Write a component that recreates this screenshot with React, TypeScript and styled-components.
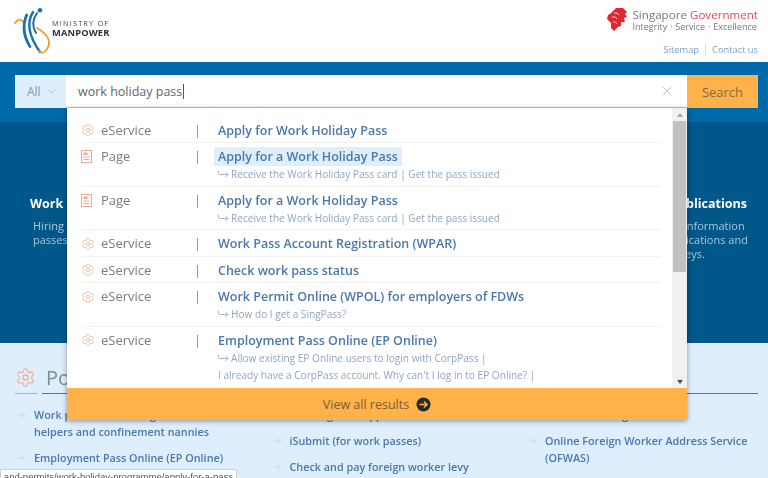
import styled, { createGlobalStyle } from "styled-components";
import { ArrowRight, ChevronDown, Settings, X } from "lucide-react";

const GlobalStyle = createGlobalStyle`
  html, body {
    margin: 0;
    padding: 0;
    background: #fff;
    overflow: hidden;
  }
  * {
    box-sizing: border-box;
  }
`;

const Page = styled.div`
  position: relative;
  width: 768px;
  height: 478px;
  overflow: hidden;
  font-family: "Open Sans", "Liberation Sans", sans-serif;
  color: #4a78ad;
  filter: blur(0.35px);
`;

const Header = styled.header`
  height: 62px;
  display: flex;
  justify-content: space-between;
  padding: 8px 10px 0 14px;
  background: #fff;
`;

const MomLogo = styled.div`
  display: flex;
  align-items: flex-start;
  height: 46px;
`;

const MomText = styled.div`
  display: flex;
  flex-direction: column;
  padding-top: 10px;
  font-size: 7.3px;
  line-height: 10px;
  letter-spacing: 1.2px;
  color: #444;
`;

const MomStrong = styled.span`
  font-size: 9.3px;
  font-weight: 700;
  letter-spacing: 0.15px;
  color: #333;
`;

const HeaderRight = styled.div`
  display: flex;
  flex-direction: column;
  align-items: flex-end;
  gap: 11px;
`;

const GovLogo = styled.div`
  display: flex;
  gap: 4px;
  align-items: center;
`;

const GovText = styled.div`
  display: flex;
  flex-direction: column;
  font-size: 11.6px;
  line-height: 14px;
  color: #77787c;
`;

const GovRed = styled.span`
  color: #e5484f;
`;

const GovMotto = styled.span`
  font-size: 9px;
  line-height: 10px;
  color: #77787c;
  word-spacing: 0.5px;
`;

const TopLinks = styled.nav`
  display: flex;
  align-items: center;
  font-size: 9.3px;
  line-height: 13px;
  color: #7aa0c6;
`;

const TopLink = styled.a`
  padding: 0 6px;
  &:last-child {
    padding-right: 0;
    border-left: 1px solid #cfdce8;
  }
`;

const SearchBand = styled.section`
  position: relative;
  height: 60px;
  padding: 13px 10px 14px 15px;
  background: #0069a9;
  display: flex;
`;

const ScopeBox = styled.div`
  width: 51px;
  display: flex;
  align-items: center;
  gap: 4px;
  padding-left: 12px;
  background: #deeefc;
  font-size: 12px;
  color: #8a97a5;
`;

const SearchInput = styled.div`
  flex: 1;
  display: flex;
  align-items: center;
  justify-content: space-between;
  padding: 0 12px;
  background: #fff;
  border-bottom: 1px solid #b5cde2;
  font-size: 12.5px;
  color: #666;
`;

const Caret = styled.span`
  display: inline-block;
  width: 1px;
  height: 15px;
  margin-left: 1px;
  background: #555;
  vertical-align: -3px;
`;

const SearchButton = styled.div`
  width: 71px;
  display: flex;
  align-items: center;
  justify-content: center;
  background: #ffb24a;
  font-size: 13px;
  color: #8a6a3c;
`;

const Dropdown = styled.div`
  position: absolute;
  left: 67px;
  top: 46px;
  width: 620px;
  height: 312px;
  display: flex;
  flex-direction: column;
  background: #fff;
  box-shadow: 0 1px 5px rgba(0, 0, 0, 0.4);
  z-index: 2;
`;

const DropdownBody = styled.div`
  flex: 1;
  min-height: 0;
  display: flex;
`;

const ResultList = styled.div`
  flex: 1;
  overflow: hidden;
  padding: 8.5px 11px 0 14px;
`;

const Row = styled.div`
  display: grid;
  grid-template-columns: 20px 95px 22px 1fr;
  padding: 4px 0 2.5px;
  border-bottom: 1px solid #f3f3f3;
`;

const RowIcon = styled.div`
  height: 19px;
  display: flex;
  align-items: center;
  color: #f0a98e;
`;

const RowType = styled.div`
  font-size: 13px;
  line-height: 19px;
  color: #7c7c7c;
`;

const Pipe = styled.div`
  font-size: 13px;
  line-height: 19px;
  color: #8b8b8b;
  transform: translateX(-2px);
`;

const RowMain = styled.div`
  min-width: 0;
  display: flex;
  flex-direction: column;
  align-items: flex-start;
`;

const RowTitle = styled.span<{ $active?: boolean }>`
  font-size: 12.5px;
  line-height: 19px;
  font-weight: 600;
  color: #4a78ad;
  margin-left: -4px;
  padding: 0 4px;
  background: ${(p) => (p.$active ? "#deeefc" : "transparent")};
`;

const RowSub = styled.div`
  font-size: 10.1px;
  line-height: 17px;
  color: #8ea6c4;
`;

const HookIcon = styled.svg`
  width: 11px;
  height: 9px;
  margin-right: 2px;
  vertical-align: -1px;
`;

const Scrollbar = styled.div`
  width: 15px;
  display: flex;
  flex-direction: column;
  background: #f1f1f1;
`;

const ScrollArrow = styled.div<{ $down?: boolean }>`
  height: 13px;
  display: flex;
  align-items: center;
  justify-content: center;
  &::before {
    content: "";
    border-left: 3px solid transparent;
    border-right: 3px solid transparent;
    ${(p) =>
      p.$down ? "border-top: 4px solid #505050;" : "border-bottom: 4px solid #a3a3a3;"}
  }
`;

const ScrollThumb = styled.div`
  height: 151px;
  margin: 0 1px;
  background: #c1c1c1;
`;

const ScrollRest = styled.div`
  flex: 1;
`;

const ViewAll = styled.div`
  height: 32px;
  display: flex;
  align-items: center;
  justify-content: center;
  gap: 7px;
  background: #ffb24a;
  font-size: 12.5px;
  color: #7a5f36;
`;

const Hero = styled.section`
  height: 221px;
  padding: 0 17px 82px 30px;
  display: flex;
  justify-content: space-between;
  align-items: flex-end;
  background: #00578a;
`;

const HeroColumn = styled.div`
  width: 88px;
  color: #fff;
`;

const HeroIcon = styled.div`
  height: 26px;
  color: #f0a98e;
`;

const HeroTitle = styled.div<{ $indent?: number }>`
  font-size: 12.5px;
  line-height: 17px;
  font-weight: 700;
  margin-bottom: 7px;
  padding-left: ${(p) => p.$indent ?? 0}px;
`;

const HeroText = styled.div<{ $inset?: number }>`
  min-height: 42px;
  padding-left: ${(p) => p.$inset ?? 0}px;
  font-size: 11px;
  line-height: 14px;
  color: #a9c6dc;
`;

const Popular = styled.section`
  height: 135px;
  padding: 24px 10px 0 15px;
  background: #deeefc;
`;

const PopularHead = styled.div`
  display: flex;
  gap: 4px;
  height: 27px;
`;

const PopularIcon = styled.div`
  width: 23px;
  height: 27px;
  color: #f0a98e;
  border-bottom: 1px solid #ee9f84;
`;

const PopularTitle = styled.h2`
  flex: 1;
  margin: 0;
  padding-left: 4px;
  font-size: 20px;
  line-height: 22px;
  font-weight: 400;
  color: #7c8a99;
  border-bottom: 1px solid #4a78ad;
`;

const LinkColumns = styled.div`
  display: grid;
  grid-template-columns: repeat(3, 255.5px);
  padding-top: 12px;
`;

const LinkColumn = styled.ul`
  margin: 0;
  padding: 0;
  list-style: none;
  display: flex;
  flex-direction: column;
  gap: 9px;
`;

const LinkItem = styled.li`
  display: flex;
  gap: 7px;
  padding-right: 25px;
  font-size: 10.8px;
  line-height: 17px;
  font-weight: 600;
  color: #4a78ad;
`;

const LinkArrow = styled.span`
  flex: none;
  width: 12px;
  height: 17px;
  display: flex;
  align-items: center;
  color: #b7c6d2;
`;

const StatusBar = styled.div`
  position: absolute;
  left: 0;
  bottom: -6px;
  width: 237px;
  height: 15px;
  display: flex;
  justify-content: flex-end;
  overflow: hidden;
  white-space: nowrap;
  padding: 1px 3px 0 0;
  background: #fff;
  border: 1px solid #d0d0d0;
  font-family: "Liberation Sans", sans-serif;
  font-size: 9.5px;
  line-height: 12px;
  color: #555;
  z-index: 3;
`;

function Hook() {
  return (
    <HookIcon viewBox="0 0 11 9" fill="none" stroke="#a9b4bf" strokeWidth="1">
      <path d="M.5 1v2.5q0 1 1 1H10M7.5 2l2.5 2.5L7.5 7" />
    </HookIcon>
  );
}

function PageIcon() {
  return (
    <svg width="11" height="13" viewBox="0 0 11 13" fill="none" stroke="#f0a98e">
      <rect x=".5" y=".5" width="10" height="12" />
      <rect x="2.5" y="2.5" width="4" height="2.5" fill="#f0a98e" stroke="none" />
      <path d="M2.5 7h6M2.5 9.5h6" />
    </svg>
  );
}

type Result = {
  kind: "eService" | "Page";
  title: string;
  active?: boolean;
  sub?: string[];
};

const results: Result[] = [
  { kind: "eService", title: "Apply for Work Holiday Pass" },
  {
    kind: "Page",
    title: "Apply for a Work Holiday Pass",
    active: true,
    sub: ["Receive the Work Holiday Pass card | Get the pass issued"],
  },
  {
    kind: "Page",
    title: "Apply for a Work Holiday Pass",
    sub: ["Receive the Work Holiday Pass card | Get the pass issued"],
  },
  { kind: "eService", title: "Work Pass Account Registration (WPAR)" },
  { kind: "eService", title: "Check work pass status" },
  {
    kind: "eService",
    title: "Work Permit Online (WPOL) for employers of FDWs",
    sub: ["How do I get a SingPass?"],
  },
  {
    kind: "eService",
    title: "Employment Pass Online (EP Online)",
    sub: [
      "Allow existing EP Online users to login with CorpPass |",
      "I already have a CorpPass account. Why can't I log in to EP Online? |",
      "Check if you can use EP Online using CorpPass",
    ],
  },
];

const linkColumns = [
  [
    "Work permits for foreign domestic helpers and confinement nannies",
    "Employment Pass Online (EP Online)",
  ],
  [
    "Working Pass Application",
    "iSubmit (for work passes)",
    "Check and pay foreign worker levy",
  ],
  [
    "SGWorkPass digital cards",
    "Online Foreign Worker Address Service (OFWAS)",
  ],
];

function App() {
  return (
    <Page>
      <GlobalStyle />
      <Header>
        <MomLogo>
          <svg width="38" height="46" viewBox="0 0 38 46" fill="none" strokeLinecap="round">
            <circle cx="26" cy="2.3" r="2.3" fill="#1a70b0" />
            <path d="M1 15Q5 9 9 13.5" stroke="#f39a2e" strokeWidth="1.7" />
            <path d="M12.7 7Q6 22 16 38.6" stroke="#1a70b0" strokeWidth="2.8" />
            <path d="M19 4Q9 20 26 44" stroke="#1a70b0" strokeWidth="2.4" />
            <path d="M23 5Q16 15 22 25" stroke="#1a70b0" strokeWidth="2" />
            <path d="M23 20Q40 30 33 41Q29 47 25 43" stroke="#f39a2e" strokeWidth="1.7" />
          </svg>
          <MomText>
            <span>MINISTRY OF</span>
            <MomStrong>MANPOWER</MomStrong>
          </MomText>
        </MomLogo>
        <HeaderRight>
          <GovLogo>
            <svg width="21" height="24" viewBox="0 0 21 24">
              <path
                fill="#e5262f"
                d="M3 6 9 0 16 0 20 4 18 6 20 9 17 10 18 14 14 14 14 18 11 19 7 23 4 20 4 15 0 11 1 7Z"
              />
              <path
                d="M7 5Q11 4 12 7M5 9Q9 8 10 11M6 14Q9 13 10 16"
                fill="none"
                stroke="#fff"
                strokeWidth="0.8"
              />
            </svg>
            <GovText>
              <span>
                Singapore <GovRed>Government</GovRed>
              </span>
              <GovMotto>Integrity · Service · Excellence</GovMotto>
            </GovText>
          </GovLogo>
          <TopLinks>
            <TopLink>Sitemap</TopLink>
            <TopLink>Contact us</TopLink>
          </TopLinks>
        </HeaderRight>
      </Header>

      <SearchBand>
        <ScopeBox>
          All
          <ChevronDown size={13} strokeWidth={1} />
        </ScopeBox>
        <SearchInput>
          <span>
            work holiday pass
            <Caret />
          </span>
          <X size={16} strokeWidth={1} color="#a8a8a8" />
        </SearchInput>
        <SearchButton>Search</SearchButton>

        <Dropdown>
          <DropdownBody>
            <ResultList>
              {results.map((r, i) => (
                <Row key={i}>
                  <RowIcon>
                    {r.kind === "Page" ? (
                      <PageIcon />
                    ) : (
                      <Settings size={14} strokeWidth={1.2} />
                    )}
                  </RowIcon>
                  <RowType>{r.kind}</RowType>
                  <Pipe>|</Pipe>
                  <RowMain>
                    <RowTitle $active={r.active}>{r.title}</RowTitle>
                    {r.sub?.map((line, j) => (
                      <RowSub key={j}>
                        {j === 0 && <Hook />}
                        {line}
                      </RowSub>
                    ))}
                  </RowMain>
                </Row>
              ))}
            </ResultList>
            <Scrollbar>
              <ScrollArrow />
              <ScrollThumb />
              <ScrollRest />
              <ScrollArrow $down />
            </Scrollbar>
          </DropdownBody>
          <ViewAll>
            View all results
            <svg width="15" height="15" viewBox="0 0 15 15" fill="none">
              <circle cx="7.5" cy="7.5" r="7" fill="#2a2a2a" />
              <path d="M3.5 7.5h7.5M8 4.5l3 3-3 3" stroke="#ffb24a" strokeWidth="1.5" />
            </svg>
          </ViewAll>
        </Dropdown>
      </SearchBand>

      <Hero>
        <HeroColumn>
          <HeroTitle>Work passes</HeroTitle>
          <HeroText $inset={3}>Hiring&nbsp;foreign&nbsp;staff passes.</HeroText>
        </HeroColumn>
        <HeroColumn>
          <HeroIcon>
            <Settings size={26} strokeWidth={1.2} />
          </HeroIcon>
          <HeroTitle $indent={7}>Publications</HeroTitle>
          <HeroText>Get information publications and surveys.</HeroText>
        </HeroColumn>
      </Hero>

      <Popular>
        <PopularHead>
          <PopularIcon>
            <Settings size={21} strokeWidth={1.2} />
          </PopularIcon>
          <PopularTitle>Popular</PopularTitle>
        </PopularHead>
        <LinkColumns>
          {linkColumns.map((col, i) => (
            <LinkColumn key={i}>
              {col.map((text) => (
                <LinkItem key={text}>
                  <LinkArrow>
                    <ArrowRight size={12} strokeWidth={1} />
                  </LinkArrow>
                  <span>{text}</span>
                </LinkItem>
              ))}
            </LinkColumn>
          ))}
        </LinkColumns>
      </Popular>

      <StatusBar>and-permits/work-holiday-programme/apply-for-a-pass</StatusBar>
    </Page>
  );
}

export default App;
